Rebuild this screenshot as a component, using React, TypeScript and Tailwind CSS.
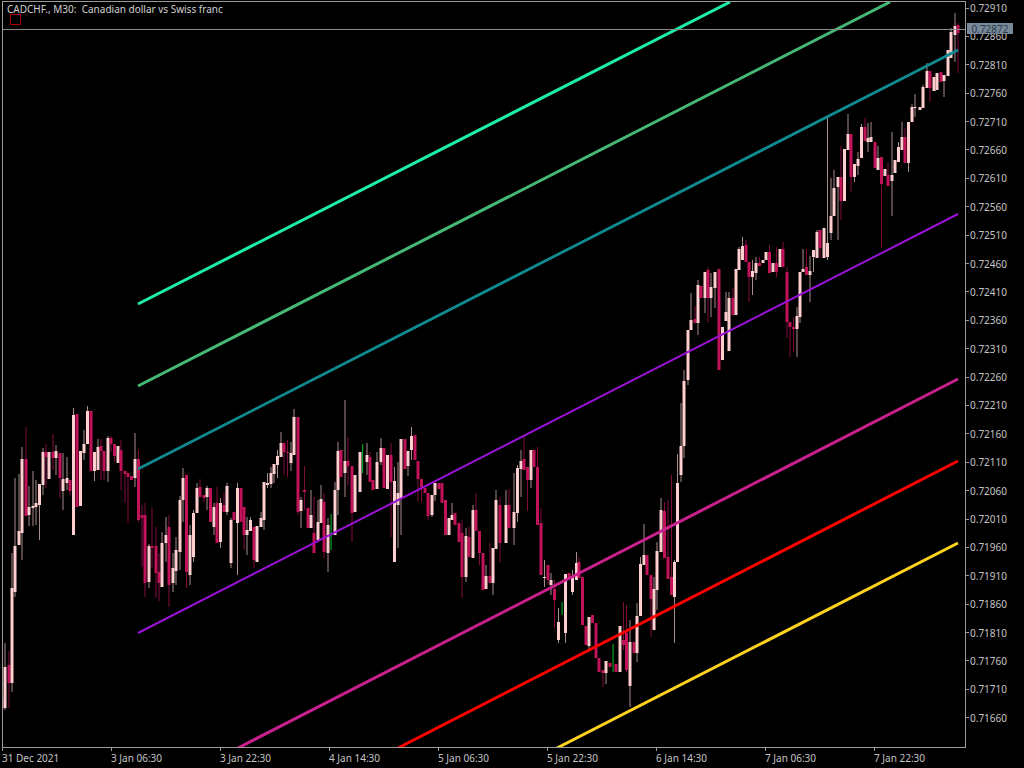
// CADCHF M30 chart: bars are read off the reference in page pixels, the svg viewBox lines up with the page
type Bar = [number, number, number, number, number?, number?]

const UP = 0
const DOWN = 1
const DOJI = 2

// x, kind, body top, body bottom, wick top, wick bottom
const bars: Bar[] = [
  [2,1,699,709,690,710],[5,0,667,708,643,710],[9,1,665,683,651,708],[12,0,588,683,553,692],[15,0,546,592,478,597],
  [19,0,531,545,474,545],[22,0,459,533,447,560],[26,1,459,516,427,516],[29,0,507,515,486,526],[33,0,506,508,471,526],
  [36,0,503,507,480,525],[39.5,0,484,505,484,540],[43,0,452,485,448,495],[46,1,452,457,444,488],[49,0,452,479,452,479],
  [53,1,452,458,434,470],[56,0,451,458,445,475],[60,1,453,478,453,498],[63,0,479,491,453,510],[67,0,478,483,457,490],
  [70,1,480,491,480,495],[73.5,0,415,535,408,535],[77,1,414,507],[80.5,0,451,506],[84,0,444,453,430,460],
  [87.5,0,411,444,406,444],[91,1,411,471],[94.5,0,452,471,452,481],[98,0,447,470,439,470],[101,1,446,451,439,480],
  [104,1,451,471,451,480],[108,0,438,471,436,482],[111,1,438,444,436,452],[114.5,1,444,456,444,462],[118,0,446,463],
  [121,1,450,471,440,490],[125,1,471,474,471,503],[128,1,473,477,473,523],[131.5,1,476,480],[135,0,459,478,433,487],
  [138.5,1,459,520,450,522],[142,1,515,518,505,567],[145,1,515,583,503,597],[149,0,546,582,544,588],[152,1,546,548,507,568],
  [156,1,546,573,527,598],[159,1,572,583,553,601],[162,0,543,587,532,587],[166,0,535,543,517,562],[169,1,527,585,515,607],
  [173,0,568,583,553,592],[176,0,550,571,537,585],[180,0,500,552,496,570],[183,0,478,500,468,522],[186.5,1,475,572,475,588],
  [190,0,535,575,525,585],[193.5,0,513,557,510,562],[197,0,488,513,483,513],[200,1,487,497,479,497],[204,1,495,498,495,502],
  [207,0,488,497,486,510],[210.5,1,488,522],[214,0,507,527,503,535],[217,1,503,543,487,543],[220.5,0,503,542,498,548],
  [224,1,505,512,493,512],[227,0,486,512,483,515],[231,0,520,563,518,568],[234,1,512,520],[237.5,0,488,523,483,575],
  [241,1,488,522],[244,1,507,535,507,550],[247,0,530,535,517,555],[250.5,0,520,531,517,531],[254,1,527,560,527,568],
  [257,0,526,562],[261,0,518,527,512,527],[264,0,482,520,482,530],[267.5,0,483,485,473,488],[271,0,473,484,467,488],
  [274,0,464,474,464,483],[277.5,0,456,465,450,478],[281,0,443,457,432,457],[284,1,443,452,443,475],[287.5,1,452,453,440,477],
  [291,0,453,463,442,471],[294,0,417,455,409,455],[298,1,417,512,417,515],[301,0,500,511,497,528],[304.5,1,490,492,466,510],
  [308,1,508,528],[311,0,515,528,490,528],[314,1,533,553,497,553],[318,0,522,540,500,540],[321,0,499,523,485,523],
  [324,1,502,552,493,558],[328,0,525,553,518,572],[331,2,534,536,514,550],[335,0,490,535,482,535],[338,0,451,490,442,515],
  [341,1,450,477],[345,0,461,473,400,497],[348,1,461,466,437,485],[352,1,466,513,466,542],[355,0,475,512],
  [360,0,452,492],[362.5,2,458,460,444,473],[367,0,455,462,443,475],[370,1,457,482,452,482],[373,1,480,490],
  [377,0,462,489,452,489],[381,0,448,462,438,465],[384,1,448,488],[387.5,0,455,489],[391,1,455,482,443,537],
  [394.5,0,481,562,467,562],[398,0,493,505,462,548],[401,0,439,498,439,535],[405,1,439,469],[408,0,451,466,451,476],
  [411.5,0,436,450,427,460],[415,1,435,460],[418,1,461,479,461,501],[421.5,1,479,487,479,502],[425,1,488,493],
  [428,1,493,516,493,520],[432,0,495,515,495,517],[435,0,483,495,483,501],[439,1,483,489],[442,1,483,503],
  [445.5,1,500,535],[449,0,518,535],[452,0,515,520,503,520],[455,1,513,525],[459,1,523,542],
  [462,1,533,577,520,598],[466,0,536,577,528,582],[469,1,537,557,527,557],[473,0,510,558,505,558],[476,1,510,531,493,531],
  [479.5,1,531,553,531,565],[483,1,553,590],[486,0,576,589,565,589],[490,1,576,583,543,583],[493,0,548,583,548,595],
  [496,0,500,549,490,549],[500,1,505,543,497,562],[506,0,505,543,490,543],[509,1,505,528,489,528],[514,0,512,528,473,545],
  [517.5,0,468,513,465,522],[521,0,461,469,450,497],[524,1,459,470,437,470],[527.5,1,467,480,467,511],[531,0,450,480,450,488],
  [534,1,450,467],[537.5,1,467,525,447,525],[541,1,523,575,508,575],[544.5,0,577,578,560,587],[548,1,565,580,565,585],
  [551,0,580,585,573,595],[554.5,1,589,600,580,628],[558.5,0,622,640,608,643],[562,2,614,615,602,615],[565.5,0,574,633,574,643],
  [569,1,573,579],[572.5,0,577,592,570,595],[576.5,0,563,580,552,580],[579,1,562,578,557,578],[582.5,1,577,625],
  [586,1,626,645],[589,0,617,646,617,652],[592.5,1,615,623],[596,1,623,658],[599,1,658,672],
  [603,1,670,673,670,687],[606,0,661,673,661,684],[610,1,663,667],[613,2,664,666,644,672],[616,1,664,672],
  [620,0,626,672],[623.5,1,640,645,602,650],[626.5,1,633,670,605,672],[630,0,642,686,620,707],[634,1,642,653],
  [637,0,616,653,603,662],[640.5,0,564,616,557,616],[644,0,555,565,524,565],[647,1,555,575],[651,1,575,599,575,637],
  [654,0,589,630,577,630],[657,0,551,590,542,610],[661,0,510,552,498,552],[664.5,1,511,558,502,558],[668,1,557,579,500,579],
  [671.5,1,577,595,475,595],[674.5,0,562,597,560,643],[677.5,0,483,562,454,562],[681,0,446,475,403,482],[684,0,381,446,370,458],
  [688,0,330,380,330,385],[691,0,320,330,293,330],[695,1,319,323,306,323],[698,0,285,323,280,335],[701,1,286,298],
  [705,0,272,298,272,313],[708,1,270,298,267,322],[711,0,287,298,273,317],[715,0,272,288,272,308],[719,1,269,370],
  [722.5,0,327,360],[726,0,312,321,292,321],[729,0,298,351,292,351],[733,1,298,315,288,315],[736,0,269,315],
  [739,0,249,270,247,270],[742.5,0,246,260,237,260],[746,1,245,262,240,262],[749,1,262,277,262,302],[752.5,0,271,277,260,295],
  [756,0,263,273,257,280],[759.5,1,263,266,257,266],[763,0,260,263],[766,0,252,260],[769.5,1,252,273,245,273],
  [773,0,263,272],[776.5,1,263,272,247,277],[780,0,249,267],[783,1,249,267,242,267],[787,1,272,322,267,338],
  [790,1,322,327,322,357],[793.5,1,327,329,317,352],[797,0,316,329,307,357],[800,0,272,317,272,323],[803,0,269,272,249,272],
  [806.5,1,267,275,249,275],[810,0,271,275,256,302],[813.5,0,250,257,250,272],[817,0,232,258,230,258],[820,1,230,248,230,258],
  [824,0,228,258,228,258],[827.5,0,243,257,115,260],[831,0,216,233,178,240],[834,0,188,216,170,216],[838,0,177,187,177,240],
  [841,1,177,201,146,220],[844.5,0,149,201],[848,0,134,150,114,150],[851,1,134,177,134,192],[854.5,0,164,177,164,182],
  [858,0,159,166,152,175],[861.5,0,127,158,124,158],[865,1,127,141,118,141],[868,0,138,142,123,152],[871,0,137,142,122,142],
  [875,1,142,168],[878,0,158,170,146,170],[881.5,1,157,184,157,248],[885,0,169,176],[888,1,175,186,162,186],
  [892,0,175,181,132,216],[895,0,160,173],[898.5,0,147,162,142,162],[902,0,137,150,122,150],[905,1,137,163,128,163],
  [908.5,0,122,163,122,172],[912,0,107,122,104,122],[915,0,107,108,94,117],[920,0,107,110],[923,0,87,108,85,108],
  [927,0,71,88,63,88],[930,1,71,88,71,102],[934,0,77,91],[937,0,73,90],[941,1,72,82],
  [944,0,75,81,75,97],[948,0,50,76],[951,0,32,58,28,58],[955,0,26,35,13,62],[958,1,25,33,23,73],
]

const levels = [
  { color: '#1df0a6', width: 3, x1: 138, y1: 304, x2: 730, y2: 2 },
  { color: '#46b876', width: 3, x1: 138, y1: 386, x2: 890, y2: 2 },
  { color: '#0f8a90', width: 2.8, x1: 138, y1: 469, x2: 958, y2: 50 },
  { color: '#9a12d6', width: 2, x1: 138, y1: 633, x2: 958, y2: 214 },
  { color: '#c9208e', width: 3, x1: 238, y1: 748, x2: 958, y2: 379 },
  { color: '#ff0000', width: 3, x1: 398, y1: 748, x2: 958, y2: 461 },
  { color: '#ffd21f', width: 3, x1: 557, y1: 748, x2: 958, y2: 543 },
]

const prices = [
  '0.72910', '0.72860', '0.72810', '0.72760', '0.72710', '0.72660', '0.72610', '0.72560', '0.72510',
  '0.72460', '0.72410', '0.72360', '0.72310', '0.72260', '0.72210', '0.72160', '0.72110', '0.72060',
  '0.72010', '0.71960', '0.71910', '0.71860', '0.71810', '0.71760', '0.71710', '0.71660',
]

const times = [
  '31 Dec 2021', '3 Jan 06:30', '3 Jan 22:30', '4 Jan 14:30', '5 Jan 06:30',
  '5 Jan 22:30', '6 Jan 14:30', '7 Jan 06:30', '7 Jan 22:30',
]

function Candle({ bar }: { bar: Bar }) {
  const [x, kind, top, bottom, wickTop, wickBottom] = bar
  if (kind === DOJI) {
    return <rect x={x - 0.5} y={wickTop} width={1.2} height={(wickBottom ?? bottom) - (wickTop ?? top)} fill="#00a020" />
  }
  const body = kind === UP ? '#ffcfcf' : '#c2125a'
  const wick = kind === UP ? '#a88c8c' : '#800c3e'
  const y1 = wickTop ?? top
  const y2 = wickBottom ?? bottom
  return (
    <g>
      <rect x={x - 0.5} y={y1} width={1} height={y2 - y1} fill={wick} />
      <rect x={x - 1.5} y={top} width={3} height={bottom - top} fill={body} />
    </g>
  )
}

export default function App() {
  return (
    <div className="flex h-[768px] w-[1024px] flex-col overflow-hidden bg-black font-['Noto_Sans',sans-serif] text-[10px] leading-none text-[#c4c4c4]">
      <div className="flex h-[748px] pl-[2px] pt-[1px]">
        <div className="relative h-[747px] w-[964px] border border-[#9c9c9c]">
          <svg className="block h-[745px] w-[962px]" viewBox="3 2 962 745">
            {bars.map((bar) => (
              <Candle key={bar[0]} bar={bar} />
            ))}
            {levels.map((line) => (
              <line
                key={line.color}
                x1={line.x1}
                y1={line.y1}
                x2={line.x2}
                y2={line.y2}
                stroke={line.color}
                strokeWidth={line.width}
              />
            ))}
          </svg>
          <span className="absolute left-[4px] top-[2px] whitespace-pre text-[#d0d0d0]">
            CADCHF., M30:  Canadian dollar vs Swiss franc
          </span>
          <span className="absolute left-[7px] top-[12px] h-[11px] w-[11px] border border-[#a80000]" />
          <span className="absolute left-0 right-0 top-[27px] h-px bg-[#8c8c8c]" />
        </div>
        <div className="relative flex h-[722px] w-[58px] flex-col justify-between pt-[2px]">
          {prices.map((price) => (
            <div key={price} className="flex h-[10px] items-center">
              <span className="mr-[1px] h-px w-[3px] bg-[#9c9c9c]" />
              <span>{price}</span>
            </div>
          ))}
          <span className="absolute left-[1px] top-[22px] flex h-[11px] w-[46px] items-center justify-center bg-[#778899] text-[#2b3a4a]">
            0.72872
          </span>
        </div>
      </div>
      <div className="flex pl-[2px]">
        {times.map((time) => (
          <div key={time} className="w-[109px]">
            <div className="h-[3px] w-px bg-[#9c9c9c]" />
            <div className="pt-[2px]">{time}</div>
          </div>
        ))}
      </div>
    </div>
  )
}
